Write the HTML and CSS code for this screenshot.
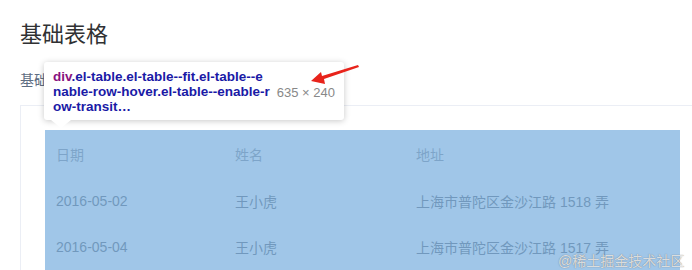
FILE: index.html
```html
<!DOCTYPE html>
<html lang="zh">
<head>
<meta charset="utf-8">
<link rel="stylesheet" href="styles.css">
</head>
<body>
<div class="page">
  <h2 class="title">基础表格</h2>
  <p class="desc">基础的表格展示用法。</p>
  <div class="card">
    <div class="table">
      <div class="row head">
        <div class="cell c1">日期</div>
        <div class="cell c2">姓名</div>
        <div class="cell c3">地址</div>
      </div>
      <div class="row">
        <div class="cell c1">2016-05-02</div>
        <div class="cell c2">王小虎</div>
        <div class="cell c3">上海市普陀区金沙江路 1518 弄</div>
      </div>
      <div class="row">
        <div class="cell c1">2016-05-04</div>
        <div class="cell c2">王小虎</div>
        <div class="cell c3">上海市普陀区金沙江路 1517 弄</div>
      </div>
    </div>
  </div>

  <div class="tip">
    <div class="tip-sel">
      <span class="line"><span class="tag">div</span>.el-table.el-table--fit.el-table--e</span>
      <span class="line">nable-row-hover.el-table--enable-r</span>
      <span class="line">ow-transit…</span>
    </div>
    <div class="tip-size">635 × 240</div>
  </div>

  <svg class="red-arrow" width="60" height="24" viewBox="0 0 60 24">
    <polygon fill="#e8231b" points="48,1 49,3 14,15 15,20 1,17 11,8 12,12"/>
  </svg>

  <div class="watermark">@稀土掘金技术社区</div>
</div>
</body>
</html>
```
FILE: styles.css
```css
html, body {
  margin: 0;
  padding: 0;
  overflow: hidden;
  background: #ffffff;
}

body {
  font-family: "Liberation Sans", "Noto Sans CJK SC", sans-serif;
  width: 692px;
  height: 270px;
}

.page {
  position: relative;
  padding: 22px 0 0 20px;
}

.title {
  margin: 0;
  font-size: 22px;
  line-height: 26px;
  font-weight: 400;
  color: #303133;
}

.desc {
  margin: 21px 0 14px;
  font-size: 14px;
  line-height: 22px;
  color: #5e6d82;
}

.card {
  width: 683px;
  border: 1px solid #ebeef5;
  border-right: none;
  padding: 24px 0 0 24px;
}

.table {
  position: relative;
  width: 635px;
  height: 240px;
  background: #ffffff;
  font-size: 14px;
}

.table::after {
  content: "";
  position: absolute;
  inset: 0;
  background: rgba(111, 168, 220, 0.66);
}

.row {
  display: flex;
  height: 46px;
  align-items: center;
  color: #767a80;
}

.row.head {
  color: #9a9da3;
  height: 48px;
}

.cell {
  padding-left: 11px;
  box-sizing: border-box;
  white-space: nowrap;
}

.c1 {
  width: 179px;
}

.c2 {
  width: 181px;
}

.c3 {
  flex: 1;
}

.tip {
  position: absolute;
  left: 44px;
  top: 62px;
  width: 300px;
  box-sizing: border-box;
  padding: 7px 9px 6px 9px;
  display: flex;
  align-items: center;
  justify-content: space-between;
  background: #ffffff;
  border-radius: 3px;
  box-shadow: 0 1px 6px rgba(0, 0, 0, 0.22);
}

.tip::after {
  content: "";
  position: absolute;
  left: 7px;
  bottom: -8px;
  border-left: 10px solid transparent;
  border-right: 10px solid transparent;
  border-top: 8px solid #ffffff;
}

.tip-sel {
  display: flex;
  flex-direction: column;
  font-size: 13.5px;
  line-height: 15px;
  font-weight: 700;
  color: #1a1aa6;
  white-space: nowrap;
}

.tag {
  color: #881280;
}

.tip-size {
  font-size: 13px;
  color: #888888;
  padding-top: 1px;
}

.red-arrow {
  position: absolute;
  left: 310px;
  top: 64px;
}

.watermark {
  position: absolute;
  left: 558px;
  top: 252px;
  font-size: 14px;
  line-height: 18px;
  color: rgba(255, 255, 255, 0.75);
  text-shadow: 0 0 1px rgba(90, 90, 90, 0.9);
  white-space: nowrap;
}
```
